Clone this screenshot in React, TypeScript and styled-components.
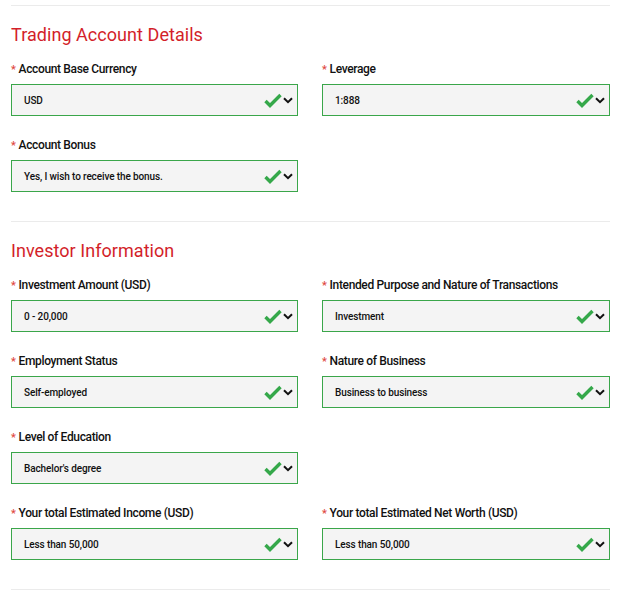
import React from "react";
import styled, { createGlobalStyle } from "styled-components";

type Field = {
    label: string,
    value: string,
};

type Section = {
    title: string,
    rows: (Field | null)[][],
};

const sections: Section[] = [
    {
        title: "Trading Account Details",
        rows: [
            [{label: "Account Base Currency", value: "USD"}, {label: "Leverage", value: "1:888"}],
            [{label: "Account Bonus", value: "Yes, I wish to receive the bonus."}, null],
        ],
    },
    {
        title: "Investor Information",
        rows: [
            [
                {label: "Investment Amount (USD)", value: "0 - 20,000"},
                {label: "Intended Purpose and Nature of Transactions", value: "Investment"},
            ],
            [
                {label: "Employment Status", value: "Self-employed"},
                {label: "Nature of Business", value: "Business to business"},
            ],
            [{label: "Level of Education", value: "Bachelor's degree"}, null],
            [
                {label: "Your total Estimated Income (USD)", value: "Less than 50,000"},
                {label: "Your total Estimated Net Worth (USD)", value: "Less than 50,000"},
            ],
        ],
    },
];

const CheckIcon = () => (
    <svg width="18" height="15" viewBox="0 0 18 15">
        <polyline points="1.5,8 6,12.5 16.5,2" fill="none" stroke="#35a84a" strokeWidth="3.4" strokeLinecap="butt" strokeLinejoin="miter"/>
    </svg>
);

const ChevronIcon = () => (
    <svg width="10" height="7" viewBox="0 0 10 7">
        <polyline points="1,1.2 5,5.2 9,1.2" fill="none" stroke="#111" strokeWidth="2"/>
    </svg>
);

const SelectField: React.FC<{field: Field}> = ({field}) => (
    <FieldWrapper>
        <Label><Required>*</Required>{field.label}</Label>
        <SelectBox>
            <Value>{field.value}</Value>
            <Icons>
                <CheckIcon/>
                <ChevronIcon/>
            </Icons>
        </SelectBox>
    </FieldWrapper>
);

const App: React.FC = () => (
    <>
        <GlobalStyle/>
        <Page>
            {sections.map((section) => (
                <FormSection key={section.title}>
                    <Heading>{section.title}</Heading>
                    <Grid>
                        {section.rows.flat().map((field, i) =>
                            field ? <SelectField key={i} field={field}/> : <div key={i}/>
                        )}
                    </Grid>
                </FormSection>
            ))}
        </Page>
    </>
);

export default App;


const GlobalStyle = createGlobalStyle`
    body {
        margin: 0;
        background: #fff;
        font-family: Roboto, "Liberation Sans", Arial, sans-serif;
        color: #111;
    }
`;

const Page = styled.div`
    width: 599px;
    margin-left: 11px;
    padding-top: 5px;
    border-bottom: 1px solid #ebebeb;
`;

const FormSection = styled.section`
    border-top: 1px solid #ebebeb;
    padding: 17px 0 29px;
`;

const Heading = styled.h2`
    margin: 0 0 14px;
    font-size: 18px;
    line-height: 24px;
    font-weight: 400;
    letter-spacing: 0.05px;
    color: #d31f2a;
`;

const Grid = styled.div`
    display: grid;
    grid-template-columns: 287px 288px;
    column-gap: 24px;
    row-gap: 21px;
`;

const FieldWrapper = styled.div`
    display: flex;
    flex-direction: column;
`;

const Label = styled.div`
    height: 16px;
    line-height: 16px;
    margin-bottom: 7px;
    font-size: 12px;
    font-weight: 500;
    letter-spacing: -0.35px;
    color: #111;
    white-space: nowrap;
`;

const Required = styled.span`
    color: #e0473f;
    font-size: 11px;
    margin-right: 3px;
`;

const SelectBox = styled.div`
    display: flex;
    align-items: center;
    height: 32px;
    box-sizing: border-box;
    border: 1px solid #3aa64a;
    background: #f4f4f4;
    padding: 0 4px 0 12px;
`;

const Value = styled.div`
    flex: 1;
    font-size: 10px;
    font-weight: 500;
    letter-spacing: -0.12px;
    color: #111;
    white-space: nowrap;
`;

const Icons = styled.div`
    display: flex;
    align-items: center;
    gap: 1px;
`;
